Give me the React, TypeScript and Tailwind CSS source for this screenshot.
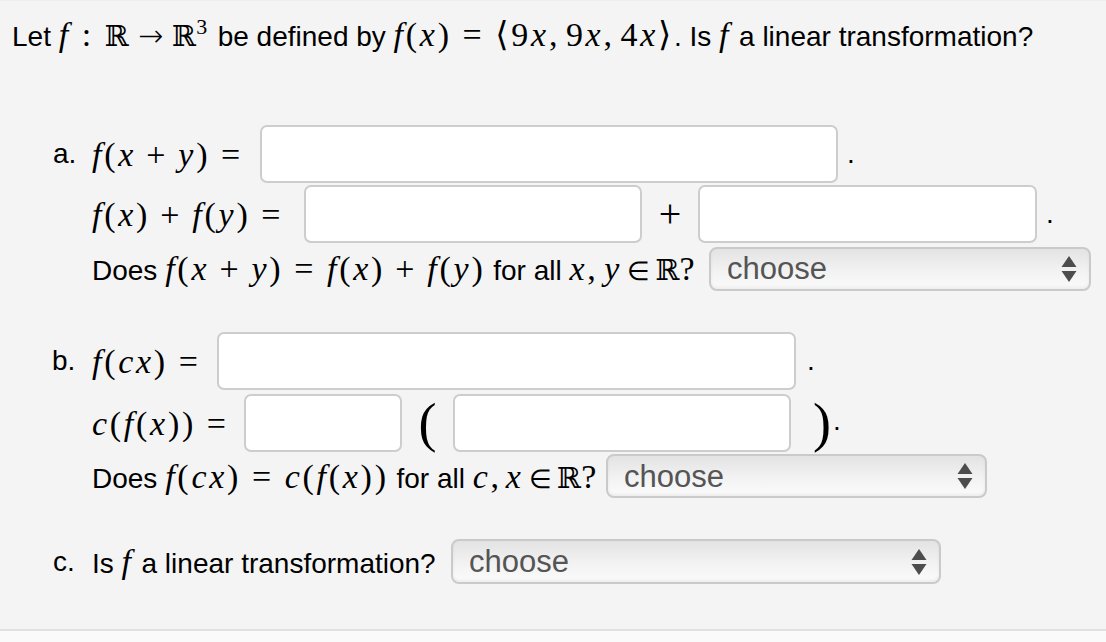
import React from "react";

const mathCls =
  "font-['Liberation_Serif','DejaVu_Serif',serif] text-[34px] tracking-[0.08em] whitespace-nowrap";

function V({ c }: { c: string }) {
  return <span className="italic">{c}</span>;
}
function Bin({ c }: { c: string }) {
  return <span className="mx-[0.3em]">{c}</span>;
}
function Rel({ c }: { c: string }) {
  return <span className="mx-[0.32em]">{c}</span>;
}
function RR() {
  return <span className="font-['DejaVu_Serif','DejaVu_Sans',serif] text-[29px] tracking-normal">ℝ</span>;
}
function In() {
  return <span className="mx-[0.2em] font-['DejaVu_Sans',sans-serif] font-extralight text-[26px] tracking-normal">∈</span>;
}
function M({ children }: { children: React.ReactNode }) {
  return <span className={mathCls}>{children}</span>;
}

function Input({ w }: { w: string }) {
  return <div className={`${w} h-[58px] shrink-0 rounded-[7px] border-2 border-[#cdcdcd] bg-white`} />;
}

function Select({ w, h }: { w: string; h: string }) {
  return (
    <div
      className={`${w} ${h} shrink-0 rounded-[8px] border-2 border-[#cacaca] bg-linear-to-b from-[#e3e3e3] via-[#f1f1f1] to-[#fbfbfb] shadow-[inset_0_-2px_3px_rgba(0,0,0,0.06)] flex items-center justify-between pl-[16px] pr-[12px]`}
    >
      <span className="text-[31px] text-[#555555] leading-none">choose</span>
      <svg width="16" height="30" viewBox="0 0 16 30">
        <polygon points="8,2 15.5,13 0.5,13" fill="#4d4d4d" />
        <polygon points="0.5,17 15.5,17 8,28" fill="#4d4d4d" />
      </svg>
    </div>
  );
}

export default function App() {
  return (
    <div className="w-[1106px] h-[642px] bg-[#fafafa] font-['Liberation_Sans',Arial,sans-serif] text-[28px] text-black overflow-hidden">
      <div className="h-[631px] bg-[#f4f4f4] border-t border-[#ededed] border-b-2 border-b-[#e1e1e1]">
        <div className="h-[124px] pl-[12px] pt-[9px] leading-[34px] whitespace-nowrap">
          Let{" "}
          <M>
            <V c="f" />
            <Rel c=":" />
            <RR />
            <span className="mx-[0.3em] font-['DejaVu_Sans',sans-serif] font-extralight text-[30px] tracking-normal">→</span>
            <RR />
            <span className="text-[22px] align-[0.55em]">3</span>
          </M>{" "}
          be defined by{" "}
          <M>
            <V c="f" />(<V c="x" />)<Rel c="=" />⟨9<V c="x" />,<span className="ml-[0.17em]">9</span>
            <V c="x" />,<span className="ml-[0.17em]">4</span>
            <V c="x" />⟩
          </M>
          . Is{" "}
          <M>
            <V c="f" />
          </M>{" "}
          a linear transformation?
        </div>

        {/* a1 */}
        <div className="h-[58px] flex items-center pl-[53px]">
          <span className="w-[39px] shrink-0">a.</span>
          <span className="w-[168px] shrink-0">
            <M>
              <V c="f" />(<V c="x" />
              <Bin c="+" />
              <V c="y" />)<Rel c="=" />
            </M>
          </span>
          <Input w="w-[578px]" />
          <span className="ml-[9px]">.</span>
        </div>

        {/* a2 */}
        <div className="mt-[2px] h-[58px] flex items-center pl-[92px]">
          <span className="w-[212px] shrink-0">
            <M>
              <V c="f" />(<V c="x" />)<Bin c="+" />
              <V c="f" />(<V c="y" />)<Rel c="=" />
            </M>
          </span>
          <Input w="w-[338px]" />
          <span className="w-[56px] shrink-0 text-center font-['Liberation_Serif',serif] text-[40px] font-light">+</span>
          <Input w="w-[339px]" />
          <span className="ml-[9px]">.</span>
        </div>

        {/* a3 */}
        <div className="mt-[3px] h-[45px] flex items-center pl-[92px]">
          <span className="w-[617px] shrink-0 whitespace-nowrap">
            Does{" "}
            <M>
              <V c="f" />(<V c="x" />
              <Bin c="+" />
              <V c="y" />)<Rel c="=" />
              <V c="f" />(<V c="x" />)<Bin c="+" />
              <V c="f" />(<V c="y" />)
            </M>{" "}
            for all{" "}
            <M>
              <V c="x" />,<span className="ml-[0.17em]" />
              <V c="y" />
              <In />
              <RR />?
            </M>
          </span>
          <Select w="w-[382px]" h="h-[44px]" />
        </div>

        {/* b1 */}
        <div className="mt-[41px] h-[58px] flex items-center pl-[52px]">
          <span className="w-[40px] shrink-0">b.</span>
          <span className="w-[125px] shrink-0">
            <M>
              <V c="f" />(<V c="c" />
              <V c="x" />)<Rel c="=" />
            </M>
          </span>
          <Input w="w-[579px]" />
          <span className="ml-[11px]">.</span>
        </div>

        {/* b2 */}
        <div className="mt-[4px] h-[58px] flex items-center pl-[92px]">
          <span className="w-[152px] shrink-0">
            <M>
              <V c="c" />(<V c="f" />(<V c="x" />))<Rel c="=" />
            </M>
          </span>
          <Input w="w-[158px]" />
          <span className="w-[51px] shrink-0 flex justify-center font-['Liberation_Serif',serif] text-[54px] font-light leading-none">
            (
          </span>
          <Input w="w-[338px]" />
          <span className="ml-[22px] font-['Liberation_Serif',serif] text-[54px] font-light leading-none">)</span>
          <span className="ml-[2px] self-end mb-[10px]">.</span>
        </div>

        {/* b3 */}
        <div className="mt-[1px] h-[46px] flex items-center pl-[92px]">
          <span className="w-[514px] shrink-0 whitespace-nowrap">
            Does{" "}
            <M>
              <V c="f" />(<V c="c" />
              <V c="x" />)<Rel c="=" />
              <V c="c" />(<V c="f" />(<V c="x" />))
            </M>{" "}
            for all{" "}
            <M>
              <V c="c" />,<span className="ml-[0.12em]" />
              <V c="x" />
              <In />
              <RR />?
            </M>
          </span>
          <Select w="w-[381px]" h="h-[44px]" />
        </div>

        {/* c */}
        <div className="mt-[40px] h-[45px] flex items-center pl-[53px]">
          <span className="w-[39px] shrink-0">c.</span>
          <span className="w-[359px] shrink-0 whitespace-nowrap">
            Is{" "}
            <M>
              <V c="f" />
            </M>{" "}
            a linear transformation?
          </span>
          <Select w="w-[490px]" h="h-[45px]" />
        </div>
      </div>
    </div>
  );
}
